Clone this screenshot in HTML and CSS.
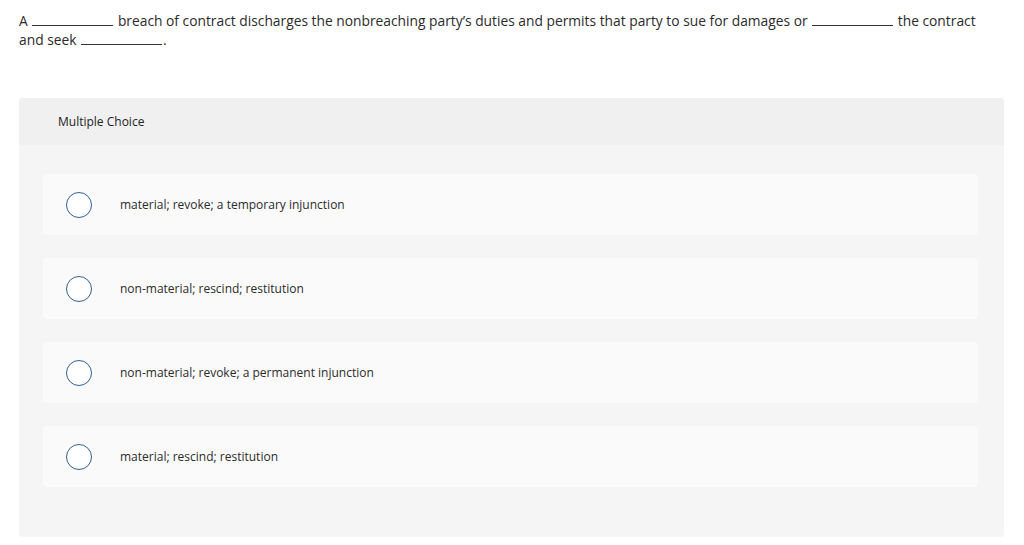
FILE: index.html
```html
<!DOCTYPE html>
<html>
<head>
<meta charset="utf-8">
<link rel="stylesheet" href="styles.css">
</head>
<body>
<p class="prompt">A <span class="blank"></span> breach of contract discharges the nonbreaching party’s duties and permits that party to sue for damages or <span class="blank"></span> the contract and seek <span class="blank"></span>.</p>
<section class="panel">
  <div class="panel-head">Multiple Choice</div>
  <div class="choices">
    <label class="choice"><span class="radio"></span><span class="text">material; revoke; a temporary injunction</span></label>
    <label class="choice"><span class="radio"></span><span class="text">non-material; rescind; restitution</span></label>
    <label class="choice"><span class="radio"></span><span class="text">non-material; revoke; a permanent injunction</span></label>
    <label class="choice"><span class="radio"></span><span class="text">material; rescind; restitution</span></label>
  </div>
</section>
</body>
</html>
```
FILE: styles.css
```css
html, body { margin: 0; padding: 0; background: #fff; }
body {
  font-family: "Open Sans", "Liberation Sans", sans-serif;
  color: #333;
  padding: 0 19px 0 19px;
}
.prompt {
  margin: 0;
  padding-top: 11px;
  width: 965px;
  font-size: 13.8px;
  line-height: 19px;
  color: #2b2b2b;
}
.blank {
  display: inline-block;
  width: 81px;
  height: 12px;
  margin: 0 1px;
  border-bottom: 1px solid #333;
  vertical-align: baseline;
}
.panel {
  margin-top: 49px;
  width: 985px;
  background: #f5f5f5;
  border-radius: 4px;
  overflow: hidden;
  padding-bottom: 50px;
}
.panel-head {
  height: 47px;
  background: #f0f0f0;
  display: flex;
  align-items: center;
  padding-left: 39px;
  font-size: 12px;
  color: #222;
}
.choices {
  display: flex;
  flex-direction: column;
  gap: 23px;
  padding: 29px 26px 0 24px;
}
.choice {
  height: 61px;
  background: #fafafa;
  border-radius: 4px;
  display: flex;
  align-items: center;
  padding-left: 23px;
}
.radio {
  width: 24px;
  height: 24px;
  border: 1px solid #2f5f97;
  border-radius: 50%;
  background: #fff;
  flex: none;
}
.text {
  margin-left: 28px;
  font-size: 12px;
  color: #2b2b2b;
}
```
